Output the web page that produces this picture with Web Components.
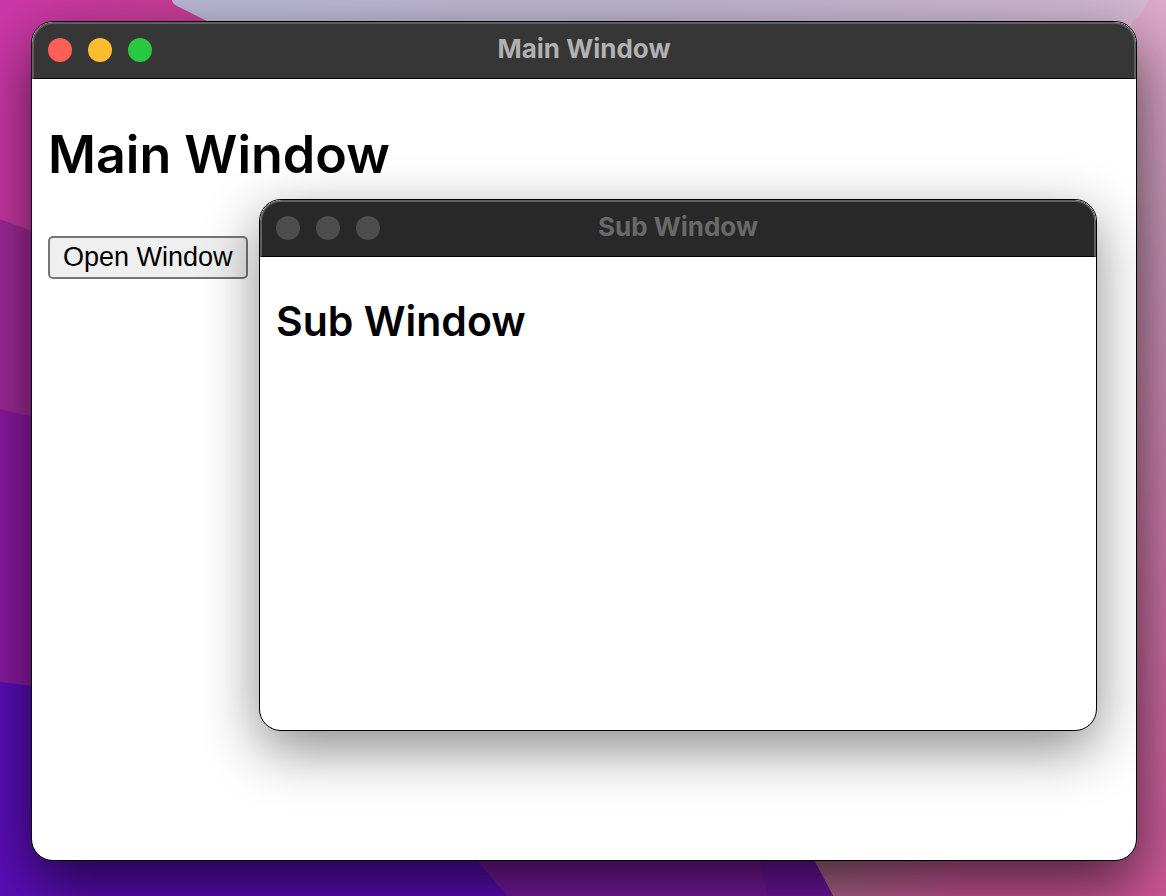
<!DOCTYPE html>
<html lang="en">
<head>
<meta charset="utf-8">
<title>Main Window</title>
<style>
  html, body { height: 100%; margin: 0; overflow: hidden; }
</style>
</head>
<body>
<desk-top>
  <desk-wallpaper slot="wallpaper"></desk-wallpaper>
  <desk-window class="main" active>
    <span slot="title">Main Window</span>
    <page-heading level="1">Main Window</page-heading>
    <push-button>Open Window</push-button>
  </desk-window>
  <desk-window slot="floating">
    <span slot="title">Sub Window</span>
    <page-heading level="2">Sub Window</page-heading>
  </desk-window>
</desk-top>

<script>
const define = (name, html, setup) => {
  const template = document.createElement('template');
  template.innerHTML = html;
  customElements.define(name, class extends HTMLElement {
    constructor() {
      super();
      this.attachShadow({ mode: 'open' }).append(template.content.cloneNode(true));
    }
    connectedCallback() { if (setup) setup(this, this.shadowRoot); }
  });
};

define('desk-top', `
  <style>
    :host {
      display: flex; box-sizing: border-box; position: relative; isolation: isolate;
      min-height: 100vh; padding: 21px 29px 35px 31px;
      font-family: Inter, "Liberation Sans", sans-serif;
    }
    ::slotted(.main) { flex: 1; }
    ::slotted([slot=floating]) { position: absolute; top: 199px; left: 259px; right: 69px; bottom: 165px; }
    ::slotted([slot=wallpaper]) { position: absolute; inset: 0; z-index: -1; }
  </style>
  <slot name="wallpaper"></slot>
  <slot></slot>
  <slot name="floating"></slot>
`);

define('desk-wallpaper', `
  <style>
    :host { display: block; }
    svg { display: block; width: 100%; height: 100%; }
  </style>
  <svg viewBox="0 0 1166 896" preserveAspectRatio="none" aria-hidden="true">
    <defs>
      <linearGradient id="pink" x1="0" y1="0" x2="1" y2="0">
        <stop offset="0" stop-color="#cb37a8"/><stop offset=".4" stop-color="#c63f90"/>
      </linearGradient>
      <linearGradient id="lilac" x1="0" y1="0" x2="1" y2="0">
        <stop offset="0" stop-color="#bbb9d5"/><stop offset=".5" stop-color="#bdb4d0"/><stop offset="1" stop-color="#d4b7d2"/>
      </linearGradient>
      <linearGradient id="rose" x1="0" y1="0" x2="0" y2="1">
        <stop offset="0" stop-color="#dea9ca"/><stop offset=".25" stop-color="#c595b4"/>
        <stop offset=".5" stop-color="#c880aa"/><stop offset=".75" stop-color="#c86aa0"/><stop offset="1" stop-color="#cc5597"/>
      </linearGradient>
      <linearGradient id="dusk" x1="0" y1="0" x2="1" y2="0">
        <stop offset="0" stop-color="#a86f88"/><stop offset="1" stop-color="#a86f88" stop-opacity="0"/>
      </linearGradient>
    </defs>
    <rect width="1166" height="896" fill="url(#rose)"/>
    <path d="M780 780H960V896H780Z" fill="url(#dusk)"/>
    <path d="M0 0H600V300H0Z" fill="url(#pink)"/>
    <path d="M172 0H1149Q1143 14 1132 22V120H360L207 21L177 6Q172 3 172 0Z" fill="url(#lilac)"/>
    <path d="M0 219L40 234V450H0Z" fill="#a02a98"/>
    <path d="M0 409L60 424V720H0Z" fill="#8a1aa2"/>
    <path d="M400 780H772L833 896H400Z" fill="#7a18a0"/>
    <path d="M740 780H772L833 896H768Z" fill="#7015a4"/>
    <path d="M0 682L250 712L460 840L507 896H0Z" fill="#5a0db8"/>
  </svg>
`);

define('desk-window', `
  <style>
    :host {
      display: flex; flex-direction: column; box-sizing: border-box;
      border: 1px solid #000; border-radius: 22px; overflow: hidden; background: #fff;
      box-shadow: 0 18px 56px rgba(0, 0, 0, .46);
      --bar: #282828; --title: #696969; --close: #4d4d4d; --minimize: #4d4d4d; --zoom: #4d4d4d;
    }
    :host([active]) {
      box-shadow: 0 24px 60px rgba(0, 0, 0, .62);
      --bar: #363636; --title: #b1b1b1; --close: #ff5f57; --minimize: #febc2e; --zoom: #28c840;
    }
    header {
      display: grid; grid-template-columns: 1fr auto 1fr; align-items: center;
      box-sizing: border-box; height: 57px; padding: 0 14px 2px;
      background: var(--bar); color: var(--title);
      border: 2px solid #606060; border-bottom: 1px solid #000;
      border-radius: 21px 21px 0 0;
    }
    .lights { display: flex; gap: 16px; }
    .lights button { width: 24px; height: 24px; padding: 0; border: 0; border-radius: 50%; }
    .close { background: var(--close); }
    .minimize { background: var(--minimize); }
    .zoom { background: var(--zoom); }
    .title { font-size: 26px; line-height: 32px; font-weight: 700; padding-bottom: 2px; }
    main { flex: 1; padding: 0 16px; }
  </style>
  <header>
    <div class="lights">
      <button class="close" aria-label="Close"></button>
      <button class="minimize" aria-label="Minimize"></button>
      <button class="zoom" aria-label="Zoom"></button>
    </div>
    <div class="title"><slot name="title"></slot></div>
  </header>
  <main><slot></slot></main>
`);

define('page-heading', `
  <style>
    :host { display: block; color: #000; }
    h1, h2 { margin: 0; font-weight: 600; }
    h1 { padding: 44px 0 49px; font-size: 52px; line-height: 64px; }
    h2 { padding: 38px 0; font-size: 41px; line-height: 52px; }
  </style>
`, (host, root) => {
  const heading = document.createElement('h' + host.getAttribute('level'));
  heading.append(document.createElement('slot'));
  root.append(heading);
});

define('push-button', `
  <style>
    :host { display: block; }
    button {
      display: block; box-sizing: border-box; padding: 4px 13px;
      border: 2px solid #767676; border-radius: 5px; background: #efefef; color: #000;
      font: 27px/31px "Liberation Sans", Arial, sans-serif;
    }
  </style>
  <button type="button"><slot></slot></button>
`);
</script>
</body>
</html>
